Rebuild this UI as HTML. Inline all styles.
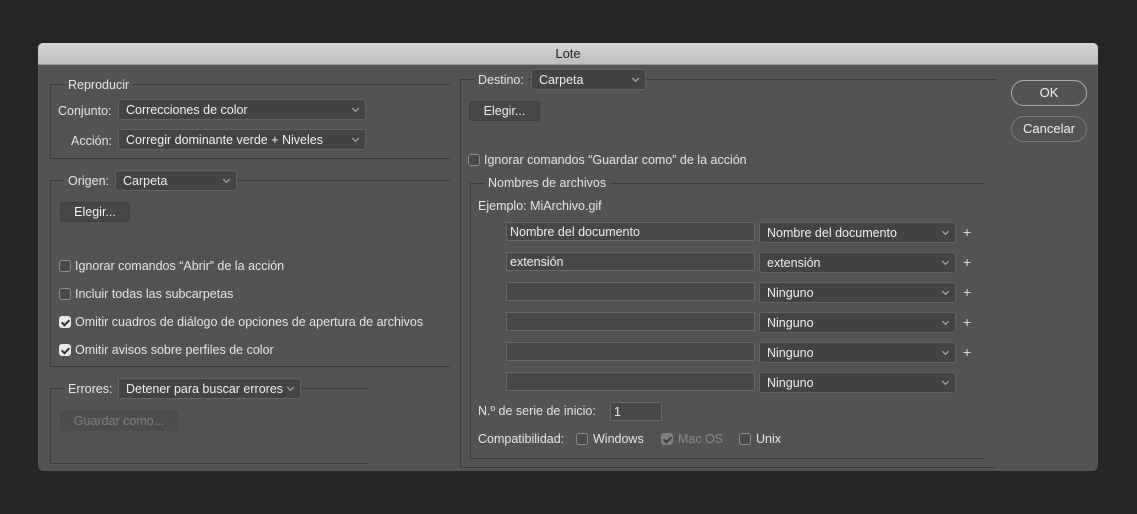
<!DOCTYPE html>
<html><head><meta charset="utf-8"><style>
*{box-sizing:border-box;margin:0;padding:0}
body{width:1137px;height:514px;background:#262626;font-family:"Liberation Sans",sans-serif;font-size:12.5px;color:#e6e6e6;position:relative;overflow:hidden}
#dlg{position:absolute;left:38px;top:43px;width:1060px;height:428px;background:#535353;border-radius:5px;overflow:hidden}
#title{position:absolute;left:0;top:0;width:1060px;height:22px;background:linear-gradient(#d6d6d6,#bdbdbd);color:#222;text-align:center;line-height:22px;font-size:13px;border-bottom:1px solid #9a9a9a}
.t{position:absolute;white-space:nowrap;line-height:16px}
.h{position:absolute;height:1px;background:#3c3c3c}
.v{position:absolute;width:1px;background:#3c3c3c}
.sel{position:absolute;height:21px;background:#434343;border:1px solid #616161;border-radius:3px;line-height:20px;padding-left:7px;color:#f0f0f0;white-space:nowrap}
.sel:after{content:"";position:absolute;right:7px;top:6px;width:4px;height:4px;border-right:1px solid #bbb;border-bottom:1px solid #bbb;transform:rotate(45deg)}
.inp{position:absolute;height:19px;background:#474747;border:1px solid #676767;line-height:18px;padding-left:3px;color:#f0f0f0;white-space:nowrap}
.btn{position:absolute;height:20px;background:#464646;border:1px solid #3e3e3e;border-radius:3px;text-align:center;line-height:19px;color:#f0f0f0}
.cb{position:absolute;width:12px;height:12px;border:1px solid #8a8a8a;border-radius:3px;background:#484848}
.cb.on{background:#e8e8e8;border-color:#e8e8e8}
.cb.on:after{content:"";position:absolute;left:3px;top:1px;width:3px;height:6px;border-right:2px solid #333;border-bottom:2px solid #333;transform:rotate(45deg)}
.pill{position:absolute;width:76px;height:26px;border:1px solid #aaa;border-radius:13px;text-align:center;line-height:24px;color:#f2f2f2;font-size:13px}
.plus{position:absolute;color:#ddd;font-size:14px}
.lab{background:#535353;padding:0 4px}
</style></head><body>
<div id="dlg">
<div id="title">Lote</div>
<div class="h" style="left:12px;top:41px;width:400px"></div>
<div class="v" style="left:12px;top:41px;height:74px"></div>
<div class="h" style="left:12px;top:115px;width:400px"></div>
<div class="t lab" style="left:26px;top:34px">Reproducir</div>
<div class="t" style="left:20px;top:60px">Conjunto:</div>
<div class="sel" style="left:80px;top:56px;width:248px">Correcciones de color</div>
<div class="t" style="left:33px;top:90px">Acción:</div>
<div class="sel" style="left:80px;top:86px;width:248px">Corregir dominante verde + Niveles</div>

<div class="h" style="left:12px;top:137px;width:400px"></div>
<div class="v" style="left:12px;top:137px;height:186px"></div>
<div class="h" style="left:12px;top:323px;width:400px"></div>
<div class="t lab" style="left:26px;top:130px">Origen:</div>
<div class="sel" style="left:77px;top:127px;width:122px">Carpeta</div>
<div class="btn" style="left:22px;top:159px;width:70px">Elegir...</div>
<div class="cb" style="left:21px;top:217px"></div><div class="t" style="left:37px;top:215px">Ignorar comandos “Abrir” de la acción</div>
<div class="cb" style="left:21px;top:245px"></div><div class="t" style="left:37px;top:243px">Incluir todas las subcarpetas</div>
<div class="cb on" style="left:21px;top:273px"></div><div class="t" style="left:37px;top:271px">Omitir cuadros de diálogo de opciones de apertura de archivos</div>
<div class="cb on" style="left:21px;top:301px"></div><div class="t" style="left:37px;top:299px">Omitir avisos sobre perfiles de color</div>

<div class="h" style="left:12px;top:345px;width:318px"></div>
<div class="v" style="left:12px;top:345px;height:75px"></div>
<div class="h" style="left:12px;top:420px;width:318px"></div>
<div class="t lab" style="left:26px;top:338px">Errores:</div>
<div class="sel" style="left:80px;top:335px;width:183px">Detener para buscar errores</div>
<div class="btn" style="left:22px;top:368px;width:118px;background:#4d4d4d;border-color:#4a4a4a;color:#7e7e7e">Guardar como...</div>

<div class="h" style="left:422px;top:36px;width:536px"></div>
<div class="v" style="left:422px;top:36px;height:388px"></div>
<div class="h" style="left:422px;top:424px;width:536px"></div>
<div class="t lab" style="left:436px;top:29px">Destino:</div>
<div class="sel" style="left:493px;top:26px;width:115px">Carpeta</div>
<div class="btn" style="left:431px;top:58px;width:71px">Elegir...</div>
<div class="cb" style="left:430px;top:111px"></div><div class="t" style="left:446px;top:109px">Ignorar comandos “Guardar como” de la acción</div>

<div class="h" style="left:432px;top:140px;width:515px"></div>
<div class="v" style="left:432px;top:140px;height:275px"></div>
<div class="h" style="left:432px;top:415px;width:515px"></div>
<div class="t lab" style="left:446px;top:132px">Nombres de archivos</div>
<div class="t" style="left:440px;top:155px">Ejemplo: MiArchivo.gif</div>

<div class="inp" style="left:468px;top:179px;width:249px">Nombre del documento</div>
<div class="sel" style="left:721px;top:179px;width:197px">Nombre del documento</div><div class="plus" style="left:925px;top:181px">+</div>
<div class="inp" style="left:468px;top:209px;width:249px">extensión</div>
<div class="sel" style="left:721px;top:209px;width:197px">extensión</div><div class="plus" style="left:925px;top:211px">+</div>
<div class="inp" style="left:468px;top:239px;width:249px"></div>
<div class="sel" style="left:721px;top:239px;width:197px">Ninguno</div><div class="plus" style="left:925px;top:241px">+</div>
<div class="inp" style="left:468px;top:269px;width:249px"></div>
<div class="sel" style="left:721px;top:269px;width:197px">Ninguno</div><div class="plus" style="left:925px;top:271px">+</div>
<div class="inp" style="left:468px;top:299px;width:249px"></div>
<div class="sel" style="left:721px;top:299px;width:197px">Ninguno</div><div class="plus" style="left:925px;top:301px">+</div>
<div class="inp" style="left:468px;top:329px;width:249px"></div>
<div class="sel" style="left:721px;top:329px;width:197px">Ninguno</div>

<div class="t" style="left:440px;top:360px">N.º de serie de inicio:</div>
<div class="inp" style="left:572px;top:359px;width:52px">1</div>
<div class="t" style="left:440px;top:388px">Compatibilidad:</div>
<div class="cb" style="left:538px;top:390px"></div><div class="t" style="left:555px;top:388px">Windows</div>
<div class="cb on" style="left:623px;top:390px;background:#8a8a8a;border-color:#8a8a8a;opacity:.8"></div><div class="t" style="left:640px;top:388px;color:#8a8a8a">Mac OS</div>
<div class="cb" style="left:701px;top:390px"></div><div class="t" style="left:718px;top:388px">Unix</div>

<div class="pill" style="left:973px;top:37px">OK</div>
<div class="pill" style="left:973px;top:73px;border-color:#7a7a7a">Cancelar</div>
</div>
</body></html>
